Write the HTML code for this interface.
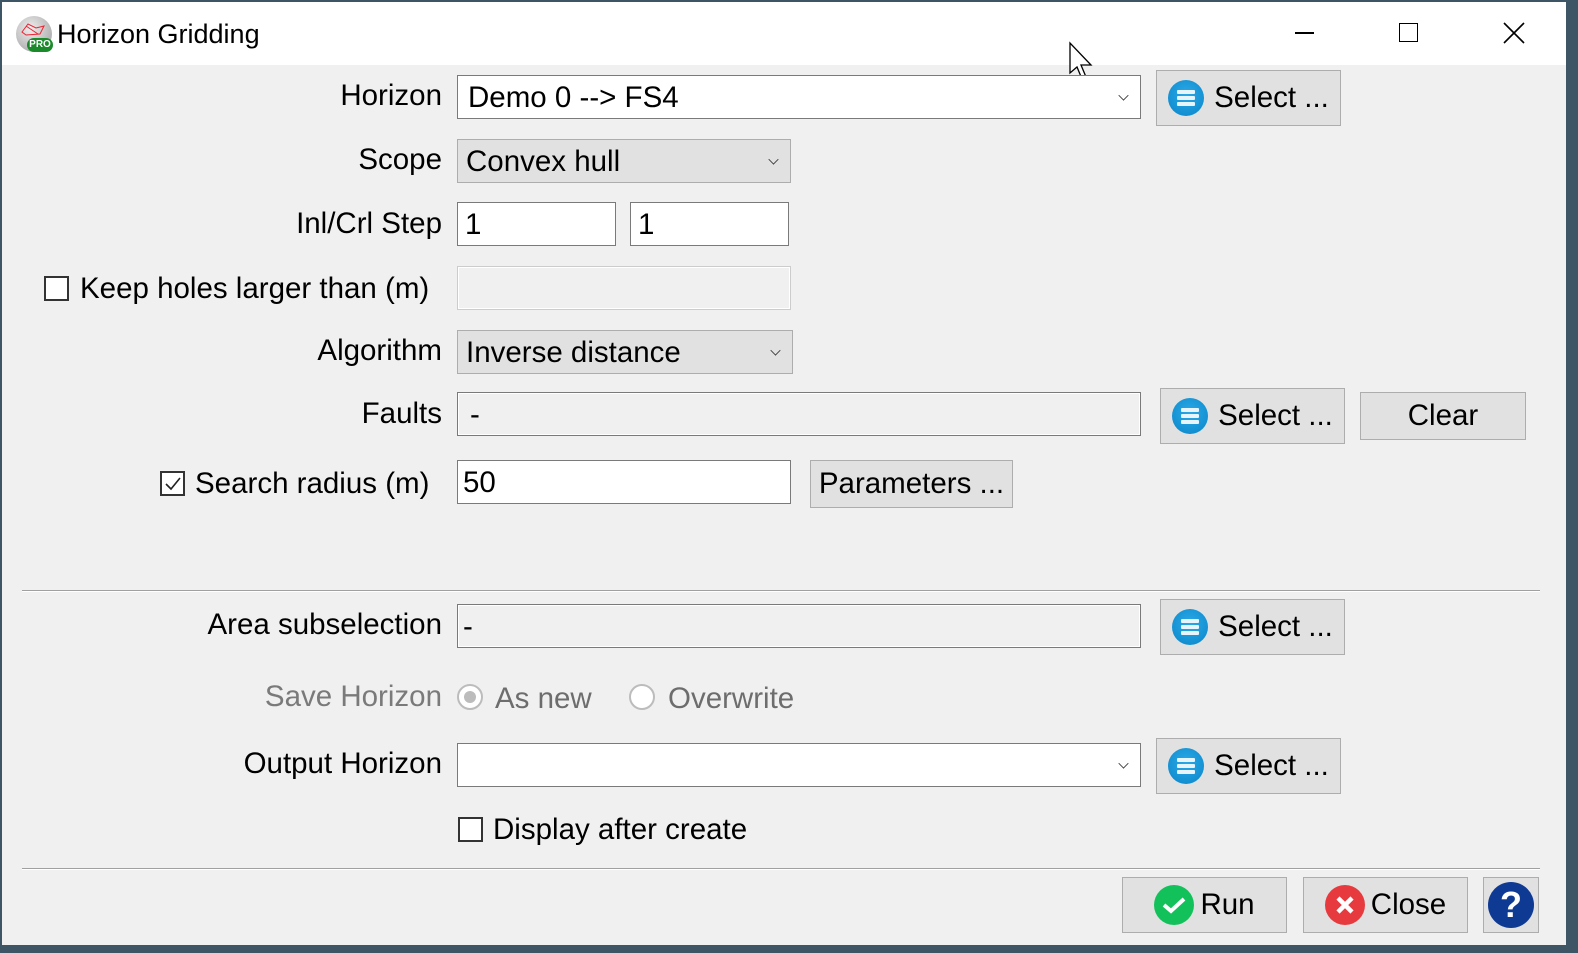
<!DOCTYPE html>
<html><head><meta charset="utf-8"><style>
*{box-sizing:border-box;margin:0;padding:0}
body{width:1578px;height:953px;background:#3e5566;position:relative;overflow:hidden;font-family:"Liberation Sans",Arial,sans-serif;font-size:29.5px;color:#000}
#win{position:absolute;left:2px;top:2px;width:1564px;height:943px;background:#f0f0f0}
#title{position:absolute;left:0;top:0;width:1564px;height:63px;background:#fff}
.a{position:absolute}
.lbl{position:absolute;right:1124px;text-align:right;white-space:nowrap;line-height:36px}
.box{position:absolute;border:1px solid #7a7a7a;background:#fff;line-height:44px;padding-left:10px;white-space:nowrap}
.cmb{position:absolute;border:1px solid #adadad;background:#e1e1e1;line-height:44px;padding-left:8px;white-space:nowrap}
.ro{position:absolute;border:1px solid #7a7a7a;background:#f0f0f0;box-shadow:inset 0 0 0 1px #fff;line-height:44px;padding-left:12px}
.chev{position:absolute;right:12px;top:15px;width:9px;height:9px;border-right:1.5px solid #333;border-bottom:1.5px solid #333;transform:rotate(45deg) scale(.8)}
.btn{position:absolute;border:1px solid #adadad;background:#e1e1e1;white-space:nowrap;display:flex;align-items:center;justify-content:center}
.ic{width:36px;height:36px;border-radius:50%;background:radial-gradient(circle at 50% 40%,#2aa8e6,#0a86c9);position:relative;margin-right:10px;flex:none}
.ic i{position:absolute;left:9px;width:18px;height:4px;background:#e8f4fb;border-radius:1px}
.cb{position:absolute;width:25px;height:25px;border:2px solid #333;background:#fff}
.sep{position:absolute;left:20px;width:1518px;height:2px;border-top:1px solid #a0a0a0;border-bottom:1px solid #fff}
</style></head><body>
<div id="win">
<div id="title">
 <div class="a" style="left:14px;top:14px;width:36px;height:36px;border-radius:50%;background:radial-gradient(circle at 40% 35%,#eee,#999)"></div>
 <svg class="a" style="left:16px;top:18px" width="30" height="20"><path d="M4 12 L10 4 L18 8 L26 6 L22 14 L8 15 Z M8 6 L20 14" stroke="#e23" fill="none" stroke-width="1"/></svg>
 <div class="a" style="left:25px;top:36px;width:26px;height:14px;border-radius:7px;background:#1a8a2a;color:#fff;font-size:10px;font-weight:bold;text-align:center;line-height:14px">PRO</div>
 <div class="a" style="left:55px;top:16px;font-size:27px;line-height:32px">Horizon Gridding</div>
 <div class="a" style="left:1293px;top:30px;width:19px;height:1.5px;background:#000"></div>
 <div class="a" style="left:1397px;top:21px;width:19px;height:19px;border:1.5px solid #000"></div>
 <svg class="a" style="left:1501px;top:20px" width="22" height="22"><path d="M1 1L21 21M21 1L1 21" stroke="#000" stroke-width="1.6"/></svg>
 <svg class="a" style="left:1066px;top:39px" width="30" height="42"><path d="M2 2 L2 32 L9 26 L14 38 L18 36 L13 24 L23 24 Z" fill="#fff" stroke="#000" stroke-width="1.3"/></svg>
</div>

<div class="lbl" style="top:76px">Horizon</div>
<div class="box" style="left:455px;top:73px;width:684px;height:44px">Demo 0 --&gt; FS4<span class="chev"></span></div>
<div class="btn" style="left:1154px;top:68px;width:185px;height:56px"><span class="ic"><i style="top:10px"></i><i style="top:16px"></i><i style="top:22px"></i></span>Select ...</div>

<div class="lbl" style="top:140px">Scope</div>
<div class="cmb" style="left:455px;top:137px;width:334px;height:44px">Convex hull<span class="chev"></span></div>

<div class="lbl" style="top:204px">Inl/Crl Step</div>
<div class="box" style="left:455px;top:200px;width:159px;height:44px;padding-left:7px">1</div>
<div class="box" style="left:628px;top:200px;width:159px;height:44px;padding-left:7px">1</div>

<div class="cb" style="left:42px;top:274px"></div>
<div class="a" style="left:78px;top:269px;line-height:36px">Keep holes larger than (m)</div>
<div class="a" style="left:455px;top:264px;width:334px;height:44px;border:1px solid #ccc;background:#f0f0f0;box-shadow:inset 0 0 0 1px #fff"></div>

<div class="lbl" style="top:331px">Algorithm</div>
<div class="cmb" style="left:455px;top:328px;width:336px;height:44px">Inverse distance<span class="chev"></span></div>

<div class="lbl" style="top:394px">Faults</div>
<div class="ro" style="left:455px;top:390px;width:684px;height:44px">-</div>
<div class="btn" style="left:1158px;top:386px;width:185px;height:56px"><span class="ic"><i style="top:10px"></i><i style="top:16px"></i><i style="top:22px"></i></span>Select ...</div>
<div class="btn" style="left:1358px;top:390px;width:166px;height:48px">Clear</div>

<div class="cb" style="left:158px;top:469px"></div>
<svg class="a" style="left:161px;top:472px" width="20" height="20"><path d="M3 10 L8 15 L17 4" stroke="#222" stroke-width="1.6" fill="none"/></svg>
<div class="a" style="left:193px;top:464px;line-height:36px">Search radius (m)</div>
<div class="box" style="left:455px;top:458px;width:334px;height:44px;padding-left:5px">50</div>
<div class="btn" style="left:808px;top:458px;width:203px;height:48px">Parameters ...</div>

<div class="sep" style="top:588px"></div>

<div class="lbl" style="top:605px">Area subselection</div>
<div class="ro" style="left:455px;top:602px;width:684px;height:44px;padding-left:5px">-</div>
<div class="btn" style="left:1158px;top:597px;width:185px;height:56px"><span class="ic"><i style="top:10px"></i><i style="top:16px"></i><i style="top:22px"></i></span>Select ...</div>

<div class="lbl" style="top:677px;color:#7a7a7a">Save Horizon</div>
<div class="a" style="left:455px;top:682px;width:26px;height:26px;border-radius:50%;border:2px solid #bcbcbc;background:#fff"><div class="a" style="left:5px;top:5px;width:12px;height:12px;border-radius:50%;background:#bcbcbc"></div></div>
<div class="a" style="left:493px;top:679px;line-height:36px;color:#6d6d6d">As new</div>
<div class="a" style="left:627px;top:682px;width:26px;height:26px;border-radius:50%;border:2px solid #bcbcbc;background:#fff"></div>
<div class="a" style="left:666px;top:679px;line-height:36px;color:#6d6d6d">Overwrite</div>

<div class="lbl" style="top:744px">Output Horizon</div>
<div class="box" style="left:455px;top:741px;width:684px;height:44px"><span class="chev"></span></div>
<div class="btn" style="left:1154px;top:736px;width:185px;height:56px"><span class="ic"><i style="top:10px"></i><i style="top:16px"></i><i style="top:22px"></i></span>Select ...</div>

<div class="cb" style="left:456px;top:815px"></div>
<div class="a" style="left:491px;top:810px;line-height:36px">Display after create</div>

<div class="sep" style="top:866px"></div>

<div class="btn" style="left:1120px;top:875px;width:165px;height:56px"><span style="width:40px;height:40px;border-radius:50%;background:#12c15a;margin-right:6px;display:flex;align-items:center;justify-content:center"><svg width="26" height="20"><path d="M3 10 L10 16 L23 4" stroke="#fff" stroke-width="4" fill="none"/></svg></span>Run</div>
<div class="btn" style="left:1301px;top:875px;width:165px;height:56px"><span style="width:40px;height:40px;border-radius:50%;background:#e63a3f;margin-right:6px;display:flex;align-items:center;justify-content:center"><svg width="22" height="22"><path d="M4 4L18 18M18 4L4 18" stroke="#fff" stroke-width="4.5"/></svg></span>Close</div>
<div class="btn" style="left:1481px;top:875px;width:56px;height:56px"><span style="width:46px;height:46px;border-radius:50%;background:#0f3a94;color:#fff;font-weight:bold;font-size:36px;display:flex;align-items:center;justify-content:center">?</span></div>
</div>
</body></html>
